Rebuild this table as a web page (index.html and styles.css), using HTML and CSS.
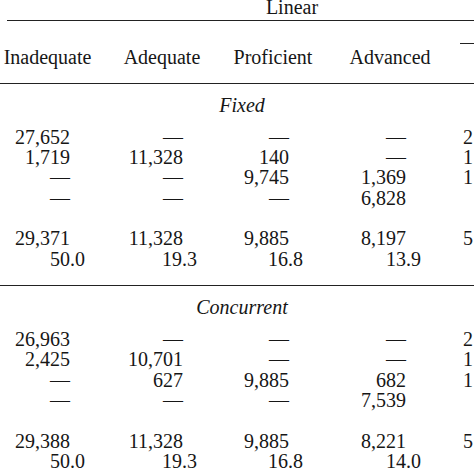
FILE: index.html
```html
<!DOCTYPE html>
<html lang="en">
<head>
<meta charset="utf-8">
<title>Linear table</title>
<link rel="stylesheet" href="styles.css">
</head>
<body>
<div class="table">
  <div class="group">Linear</div>
  <div class="row head">
    <span>Inadequate</span>
    <span>Adequate</span>
    <span>Proficient</span>
    <span>Advanced</span>
    <span class="subrule"></span>
  </div>

  <div class="block ruled">
    <div class="section">Fixed</div>
    <div class="data">
      <div class="row"><span>27,652</span><span>—</span><span>—</span><span>—</span><span>2</span></div>
      <div class="row"><span>1,719</span><span>11,328</span><span>140</span><span>—</span><span>1</span></div>
      <div class="row"><span>—</span><span>—</span><span>9,745</span><span>1,369</span><span>1</span></div>
      <div class="row"><span>—</span><span>—</span><span>—</span><span>6,828</span><span></span></div>
      <div class="blank"></div>
      <div class="row"><span>29,371</span><span>11,328</span><span>9,885</span><span>8,197</span><span>5</span></div>
      <div class="row pct"><span>50.0</span><span>19.3</span><span>16.8</span><span>13.9</span><span></span></div>
    </div>
  </div>

  <div class="block">
    <div class="section">Concurrent</div>
    <div class="data">
      <div class="row"><span>26,963</span><span>—</span><span>—</span><span>—</span><span>2</span></div>
      <div class="row"><span>2,425</span><span>10,701</span><span>—</span><span>—</span><span>1</span></div>
      <div class="row"><span>—</span><span>627</span><span>9,885</span><span>682</span><span>1</span></div>
      <div class="row"><span>—</span><span>—</span><span>—</span><span>7,539</span><span></span></div>
      <div class="blank"></div>
      <div class="row"><span>29,388</span><span>11,328</span><span>9,885</span><span>8,221</span><span>5</span></div>
      <div class="row pct"><span>50.0</span><span>19.3</span><span>16.8</span><span>14.0</span><span></span></div>
    </div>
  </div>
</div>
</body>
</html>
```

FILE: styles.css
```css
html, body {
  margin: 0;
  padding: 0;
  background: #ffffff;
  overflow: hidden;
}

body {
  font-family: "Liberation Serif", "Times New Roman", serif;
  font-size: 20px;
  color: #161616;
}

.table {
  width: 600px;
}

.group {
  margin-left: 7px;
  width: 570px;
  text-align: center;
  line-height: 14.5px;
  padding-bottom: 5.5px;
  border-bottom: 1px solid #222;
}

.row {
  display: grid;
  grid-template-columns: 95px 134px 88px 146px 137px;
}

.head {
  height: 62px;
  align-items: end;
  border-bottom: 1px solid #222;
}

.head > span {
  justify-self: center;
  line-height: 20px;
  padding-bottom: 16px;
  white-space: nowrap;
}

.head > .subrule {
  justify-self: stretch;
  align-self: start;
  margin-top: 22px;
  margin-left: -3px;
  padding: 0;
  border-top: 1px solid #222;
}

.section {
  width: 474px;
  box-sizing: border-box;
  padding: 10.5px 0 12.3px 10px;
  text-align: center;
  font-style: italic;
  line-height: 20px;
}

.data .row {
  line-height: 20.3px;
}

.data .row > span {
  text-align: right;
  white-space: nowrap;
}

.data .row > span:nth-child(1) { padding-right: 25px; }
.data .row > span:nth-child(2) { padding-right: 46px; }
.data .row > span:nth-child(3) { padding-right: 28px; }
.data .row > span:nth-child(4) { padding-right: 57px; }
.data .row > span:nth-child(5) { text-align: left; }

.data .pct > span:nth-child(1) { padding-right: 10px; }
.data .pct > span:nth-child(2) { padding-right: 32px; }
.data .pct > span:nth-child(3) { padding-right: 14px; }
.data .pct > span:nth-child(4) { padding-right: 42px; }

.blank {
  height: 20.3px;
}

.ruled {
  padding-bottom: 16.5px;
  border-bottom: 1px solid #222;
}
```
